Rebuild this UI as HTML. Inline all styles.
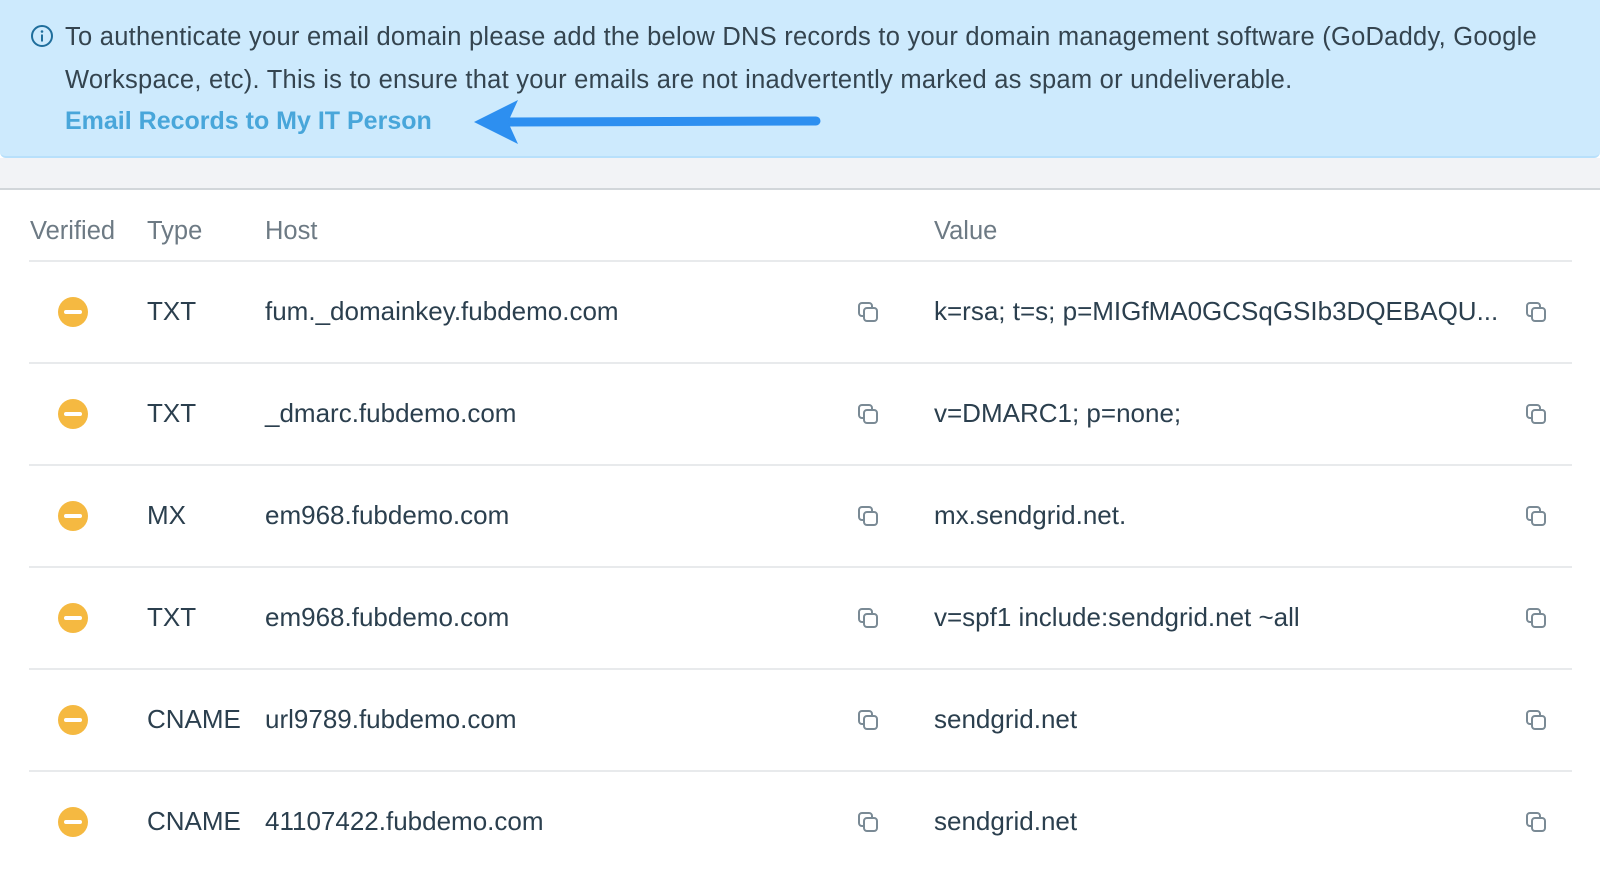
<!DOCTYPE html>
<html><head><style>
body{margin:0;width:1600px;height:883px;overflow:hidden;background:#fff;font-family:"Liberation Sans",sans-serif;color:#2b3f4e;}
.banner{position:absolute;left:0;top:0;width:1600px;height:156px;background:#cdeafd;border-bottom:2px solid #b8e0fb;border-radius:0 0 6px 6px;}
.banner .t{position:absolute;left:65px;top:16px;font-size:25.5px;letter-spacing:0.25px;line-height:43px;color:#34444f;width:1520px;}
.link{position:absolute;left:65px;top:107px;font-size:25px;font-weight:bold;color:#48a6da;}
.gray{position:absolute;left:0;top:158px;width:1600px;height:30px;background:#f2f3f6;border-bottom:2px solid #d2d6da;}
.hdr{position:absolute;top:217px;font-size:25.5px;color:#6d7a84;}
.line{position:absolute;left:29px;width:1543px;height:2px;background:#e8eaec;}
.c{position:absolute;font-size:26px;}
.dot{position:absolute;left:58px;width:30px;height:30px;border-radius:50%;background:#f5b941;}
.dot:after{content:"";position:absolute;left:6px;top:13px;width:18px;height:4px;border-radius:2px;background:#fff;}
</style></head><body>
<div class="banner">
<svg style="position:absolute;left:30px;top:24px" width="24" height="24" viewBox="0 0 24 24"><circle cx="12" cy="12" r="10" fill="none" stroke="#1f6e9c" stroke-width="2"/><circle cx="12" cy="7.5" r="1.3" fill="#1f6e9c"/><rect x="11" y="10.5" width="2" height="7" fill="#1f6e9c"/></svg>
<div class="t">To authenticate your email domain please add the below DNS records to your domain management software (GoDaddy, Google Workspace, etc). This is to ensure that your emails are not inadvertently marked as spam or undeliverable.</div>
<div class="link">Email Records to My IT Person</div>
<svg style="position:absolute;left:472px;top:98px" width="352" height="48" viewBox="0 0 352 48"><line x1="30" y1="24" x2="344" y2="23" stroke="#2d8ff0" stroke-width="9" stroke-linecap="round"/><polygon points="2,24 46,2 36,24 46,46" fill="#2d8ff0"/></svg>
</div>
<div class="gray"></div>
<div class="hdr" style="left:30px">Verified</div>
<div class="hdr" style="left:147px">Type</div>
<div class="hdr" style="left:265px">Host</div>
<div class="hdr" style="left:934px">Value</div>
<div class="line" style="top:260px"></div>
<div id="rows"></div>
<script>
var d=[["TXT","fum._domainkey.fubdemo.com","k=rsa; t=s; p=MIGfMA0GCSqGSIb3DQEBAQU..."],["TXT","_dmarc.fubdemo.com","v=DMARC1; p=none;"],["MX","em968.fubdemo.com","mx.sendgrid.net."],["TXT","em968.fubdemo.com","v=spf1 include:sendgrid.net ~all"],["CNAME","url9789.fubdemo.com","sendgrid.net"],["CNAME","41107422.fubdemo.com","sendgrid.net"]];
var cp='<svg width="22" height="22" viewBox="0 0 22 22"><rect x="2" y="2" width="13" height="13" rx="3" fill="none" stroke="#7a8a95" stroke-width="2"/><rect x="7" y="7" width="13" height="13" rx="3" fill="#fff" stroke="#7a8a95" stroke-width="2"/></svg>';
var h='';d.forEach(function(r,i){var y=312+i*102;
h+='<div class="dot" style="top:'+(y-15)+'px"></div><div class="c" style="left:147px;top:'+(y-16)+'px">'+r[0]+'</div><div class="c" style="left:265px;top:'+(y-16)+'px">'+r[1]+'</div><div style="position:absolute;left:857px;top:'+(y-11)+'px">'+cp+'</div><div class="c" style="left:934px;top:'+(y-16)+'px">'+r[2]+'</div><div style="position:absolute;left:1525px;top:'+(y-11)+'px">'+cp+'</div>';
if(i<5)h+='<div class="line" style="top:'+(y+50)+'px"></div>';});
document.getElementById('rows').innerHTML=h;
</script>
</body></html>
